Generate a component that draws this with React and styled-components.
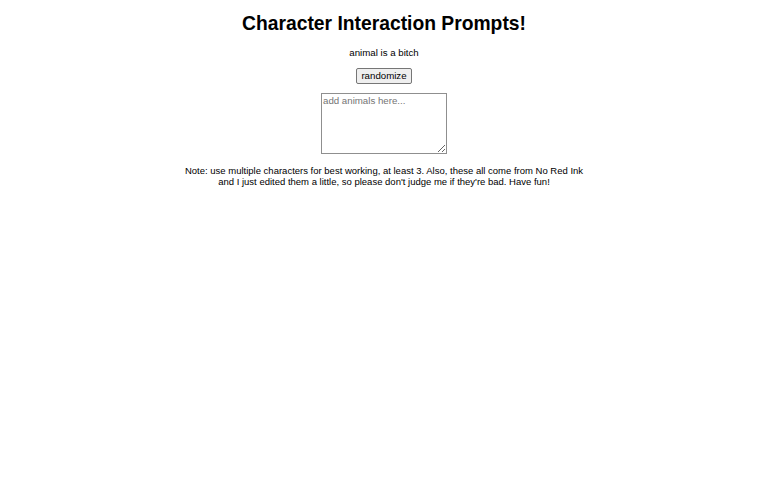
import styled, { createGlobalStyle } from "styled-components";

const GlobalStyle = createGlobalStyle`
  body {
    margin: 0;
    background: #ffffff;
    font-family: "Liberation Sans", Arial, sans-serif;
    color: #000000;
  }
`;

const Page = styled.div`
  display: flex;
  flex-direction: column;
  align-items: center;
  padding-top: 12px;
  text-align: center;
`;

const Title = styled.h1`
  margin: 0;
  font-size: 19.3px;
  font-weight: bold;
  line-height: 24px;
`;

const Prompt = styled.p`
  margin: 10px 0 0;
  font-size: 9.7px;
  line-height: 13px;
`;

const RandomButton = styled.button`
  margin-top: 9px;
  font-family: inherit;
  font-size: 9.7px;
  line-height: 12px;
  padding: 1px 4px;
  color: #000;
  background: #efefef;
  border: 1px solid #767676;
  border-radius: 2px;
`;

const AnimalList = styled.textarea`
  margin-top: 9px;
  width: 122px;
  height: 57px;
  padding: 1px;
  font-family: inherit;
  font-size: 9.7px;
  border: 1px solid #8f8f8f;
  resize: both;

  &::placeholder {
    color: #757575;
  }
`;

const Note = styled.p`
  margin: 11px 0 0;
  font-size: 9.5px;
  line-height: 11px;
`;

export default function App() {
  return (
    <>
      <GlobalStyle />
      <Page>
        <Title>Character Interaction Prompts!</Title>
        <Prompt>animal is a bitch</Prompt>
        <RandomButton>randomize</RandomButton>
        <AnimalList placeholder="add animals here..." />
        <Note>
          Note: use multiple characters for best working, at least 3. Also, these all come from No Red Ink
          <br />
          and I just edited them a little, so please don't judge me if they're bad. Have fun!
        </Note>
      </Page>
    </>
  );
}
